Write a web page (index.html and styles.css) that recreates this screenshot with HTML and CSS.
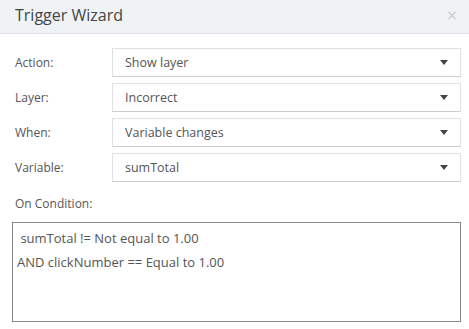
FILE: index.html
```html
<!DOCTYPE html>
<html>
<head>
<meta charset="utf-8">
<link rel="stylesheet" href="styles.css">
</head>
<body>
<div class="dialog">
  <div class="header">
    <span class="title">Trigger Wizard</span>
    <span class="close">&times;</span>
  </div>
  <div class="body">
    <div class="row">
      <label class="label">Action:</label>
      <div class="select"><span>Show layer</span><span class="caret"></span></div>
    </div>
    <div class="row">
      <label class="label">Layer:</label>
      <div class="select"><span>Incorrect</span><span class="caret"></span></div>
    </div>
    <div class="row">
      <label class="label">When:</label>
      <div class="select"><span>Variable changes</span><span class="caret"></span></div>
    </div>
    <div class="row">
      <label class="label">Variable:</label>
      <div class="select"><span>sumTotal</span><span class="caret"></span></div>
    </div>
    <div class="cond-label">On Condition:</div>
    <div class="textarea">
      <div class="line">&nbsp;sumTotal != Not equal to 1.00</div>
      <div class="line">AND clickNumber == Equal to 1.00</div>
    </div>
  </div>
</div>
</body>
</html>
```
FILE: styles.css
```css
* { box-sizing: border-box; }
html, body { margin: 0; padding: 0; background: #fff; }
body {
  font-family: "Open Sans", "Segoe UI", sans-serif;
  color: #555;
  width: 469px;
  height: 329px;
  overflow: hidden;
}
.header {
  height: 34px;
  background: #f0f3f6;
  border-bottom: 1px solid #dde3e8;
  display: flex;
  align-items: flex-start;
  justify-content: space-between;
  padding: 3px 12px 0 15px;
}
.title {
  font-size: 16px;
  line-height: 24px;
  color: #444;
}
.close {
  font-size: 18px;
  line-height: 24px;
  color: #c8ccd0;
}
.body {
  padding: 14px 8px 0 12px;
}
.row {
  display: flex;
  align-items: center;
  margin-bottom: 6px;
}
.label {
  width: 100px;
  padding-left: 3px;
  font-size: 12px;
  color: #555;
}
.select {
  flex: 1;
  height: 29px;
  border: 1px solid #dfe2e5;
  border-bottom-color: #c9ced3;
  display: flex;
  align-items: center;
  justify-content: space-between;
  padding: 0 12px 0 12px;
  font-size: 12.5px;
  color: #555;
  background: #fff;
}
.caret {
  width: 0;
  height: 0;
  border-left: 4px solid transparent;
  border-right: 4px solid transparent;
  border-top: 5px solid #444;
}
.cond-label {
  font-size: 12px;
  padding-left: 3px;
  margin-top: 12px;
  height: 28px;
  line-height: 20px;
}
.textarea {
  height: 100px;
  border: 1px solid #8a8a8a;
  padding: 4px 4px;
  font-size: 13px;
  color: #555;
}
.line {
  height: 24px;
  line-height: 22px;
}
```
